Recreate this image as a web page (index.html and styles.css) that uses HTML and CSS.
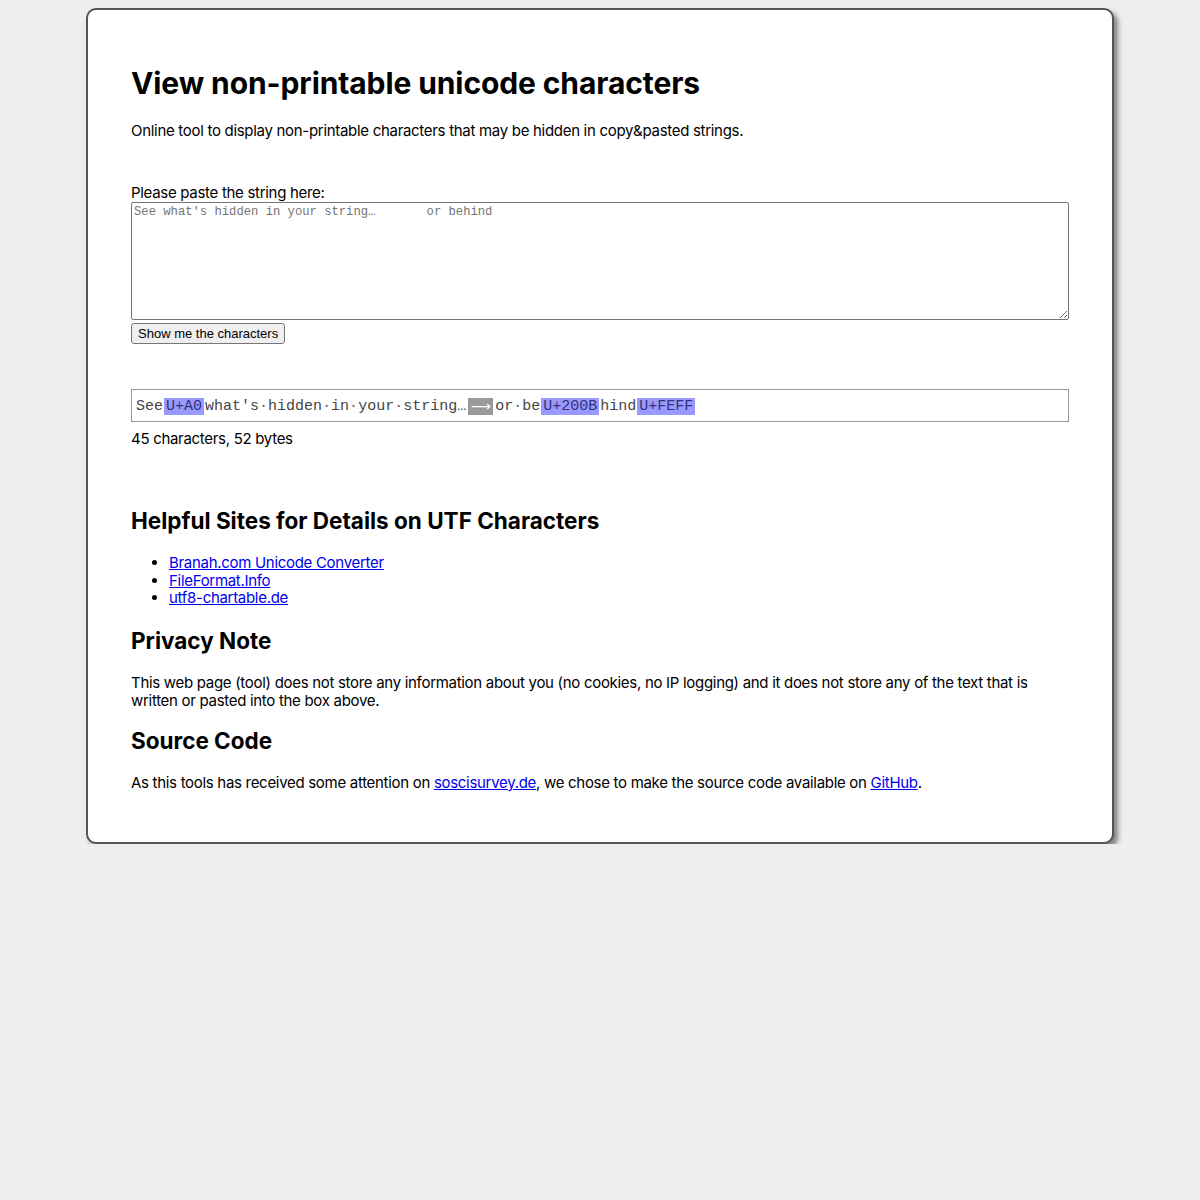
FILE: index.html
```html
<!DOCTYPE html>
<html lang="en">
  <head>
    <meta charset="UTF-8" />
    <meta name="viewport" content="width=device-width, initial-scale=1.0" />
    <link rel="stylesheet" href="styles.css">
    <title>View non-printable unicode characters</title>
  </head>
  <body>
    <div class="page">
      <h1>View non-printable unicode characters</h1>
      <p class="lead">
        Online tool to display non-printable characters that may be hidden in copy&amp;pasted strings.
      </p>

      <form class="paste-form">
        <label for="input">Please paste the string here:</label>
        <textarea id="input" placeholder="See&#160;what's hidden in your string…&#9;or be&#8203;hind&#65279;"></textarea>
        <button type="button">Show me the characters</button>
      </form>

      <div class="output">See<span class="code">U+A0</span>what's<span class="dot">·</span>hidden<span class="dot">·</span>in<span class="dot">·</span>your<span class="dot">·</span>string…<span class="tab">⟶</span>or<span class="dot">·</span>be<span class="code">U+200B</span>hind<span class="code">U+FEFF</span></div>
      <p class="count">45 characters, 52 bytes</p>

      <h2 class="first">Helpful Sites for Details on UTF Characters</h2>
      <ul>
        <li><a href="#">Branah.com Unicode Converter</a></li>
        <li><a href="#">FileFormat.Info</a></li>
        <li><a href="#">utf8-chartable.de</a></li>
      </ul>

      <h2>Privacy Note</h2>
      <p>
        This web page (tool) does not store any information about you (no cookies, no IP logging) and it does not store any of the text that is written or pasted into the box above.
      </p>

      <h2>Source Code</h2>
      <p>
        As this tools has received some attention on <a href="#">soscisurvey.de</a>, we chose to make the source code available on <a href="#">GitHub</a>.
      </p>
    </div>
  </body>
</html>
```

FILE: styles.css
```css
html {
  background: #eeeeee;
}

body {
  margin: 8px;
  font-family: Inter, "Liberation Sans", sans-serif;
  font-size: 15px;
  line-height: 18px;
  letter-spacing: -0.3px;
  color: #000;
}

.page {
  width: 938px;
  margin: 0 auto;
  padding: 35px 43px;
  background: #fff;
  border: 2px solid #555;
  border-radius: 10px;
  box-shadow: 4px 4px 5px rgba(0, 0, 0, 0.45);
}

h1 {
  font-size: 30px;
  line-height: normal;
  font-weight: 700;
  letter-spacing: -0.1px;
  margin: 20px 0 21px;
}

h2 {
  font-size: 22.5px;
  line-height: normal;
  font-weight: 700;
  letter-spacing: 0;
  margin: 17px 0 20px;
}

h2.first {
  margin-top: 59px;
}

p {
  margin: 15px 0;
}

.lead {
  margin-top: 21px;
}

ul {
  margin: 19px 0 20px;
  padding-left: 38px;
  line-height: 17.6px;
}

a {
  color: #0000ee;
}

.paste-form {
  margin-top: 44px;
}

.paste-form label {
  display: block;
}

.paste-form textarea {
  display: block;
  box-sizing: border-box;
  width: 100%;
  height: 118px;
  margin: 0;
  padding: 2px;
  font-family: "Liberation Mono", monospace;
  font-size: 12.2px;
  letter-spacing: 0;
  border: 1px solid #767676;
  border-radius: 2px;
}

.paste-form button {
  display: block;
  margin-top: 3px;
  padding: 2px 6px;
  font-family: "Liberation Sans", sans-serif;
  font-size: 13px;
  line-height: normal;
  letter-spacing: 0;
  background: #efefef;
  border: 1px solid #767676;
  border-radius: 3px;
  color: #000;
}

.output {
  margin-top: 45px;
  padding: 8px 4px 5px;
  border: 1px solid #999;
  font-family: "Liberation Mono", monospace;
  font-size: 15px;
  letter-spacing: 0;
  line-height: 18px;
  color: #444;
  white-space: nowrap;
}

.output .code {
  background: #9999ff;
  color: #33337a;
  margin: 0 1px;
  padding: 0 2px;
}

.output .dot {
  color: #666;
}

.output .tab {
  display: inline-block;
  vertical-align: top;
  width: 25px;
  height: 17px;
  margin: 0 2px;
  background: #999;
  color: #fff;
  font-family: "DejaVu Sans", sans-serif;
  font-size: 14px;
  line-height: 17px;
  text-align: center;
}

.count {
  margin-top: 8px;
}
```
